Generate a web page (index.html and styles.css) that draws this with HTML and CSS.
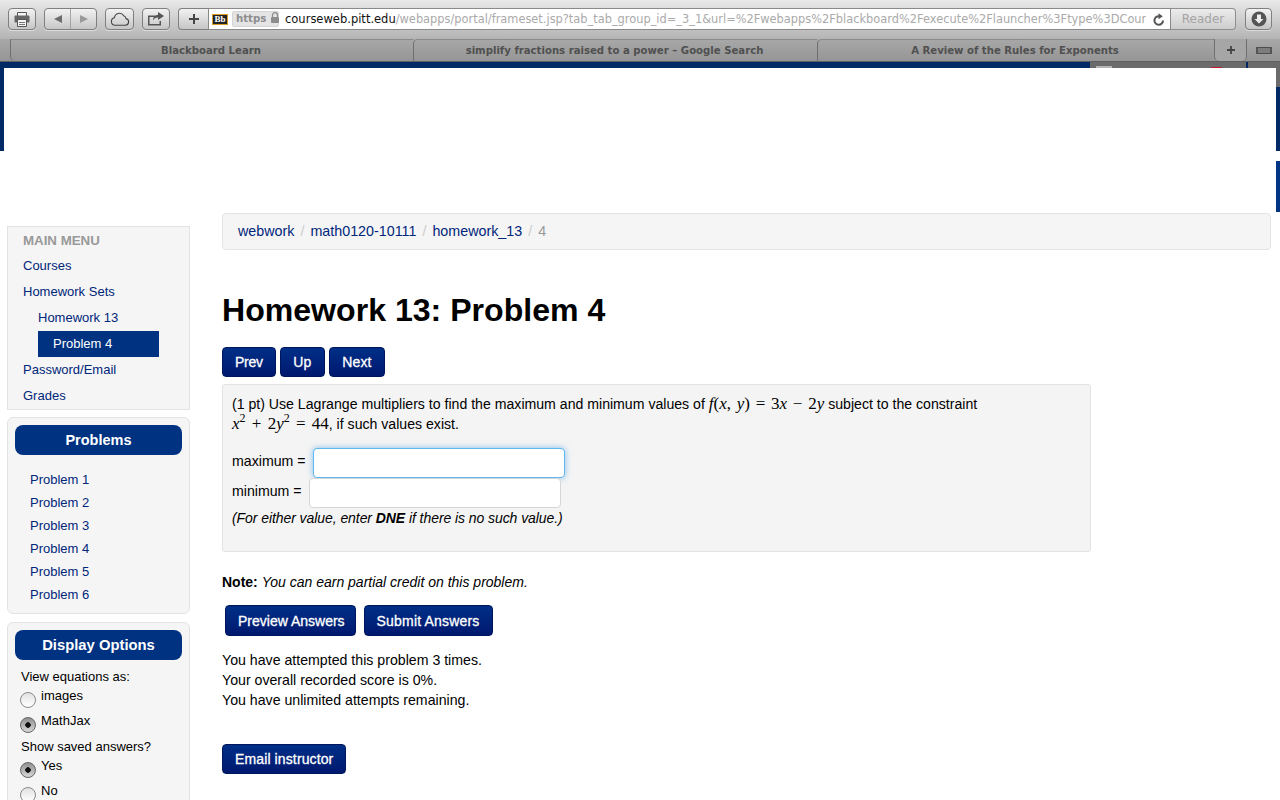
FILE: index.html
```html
<!DOCTYPE html>
<html lang="en">
<head>
<meta charset="utf-8">
<title>Homework 13: Problem 4</title>
<link rel="stylesheet" href="styles.css">
</head>
<body>
<div class="toolbar">
  <button class="tb tb-print"><svg width="16" height="15" viewBox="0 0 16 15"><path d="M3.500 .500h9v4h-9z" fill="#f4f4f4" stroke="#555"/><rect x=".5" y="3.500" width="15" height="7" rx="1" fill="#666"/><path d="M3.500 7.500h9v7h-9z" fill="#f4f4f4" stroke="#555"/><path d="M5 10.500h6M5 12.500h6" stroke="#777"/></svg></button>
  <div class="tb tb-nav"><span class="nav-half nav-left"><svg width="10" height="10" viewBox="0 0 10 10"><path d="M9 1v8L1 5z" fill="#6c6c6c"/></svg></span><span class="nav-half"><svg width="10" height="10" viewBox="0 0 10 10"><path d="M1 1v8l8-4z" fill="#9a9a9a"/></svg></span></div>
  <button class="tb tb-cloud"><svg width="20" height="14" viewBox="0 0 20 14"><path d="M5 13.300a3.800 3.800 0 0 1-.6-7.500 5 5 0 0 1 9.300-2 3.400 3.400 0 0 1 2.300 2.800A3.400 3.400 0 0 1 15.500 13.300z" fill="none" stroke="#444" stroke-width="1.100"/></svg></button>
  <button class="tb tb-share"><svg width="18" height="14" viewBox="0 0 18 14"><path d="M1 3.500h7v1.500H2.500v7h10V9H14v4.500H1z" fill="#555"/><path d="M11 0l6 4-6 4V5.500c-2.500 0-4 1-5 3 0-3.500 2-5.500 5-5.500z" fill="#555"/></svg></button>
  <div class="addr">
    <button class="addr-plus"><svg width="12" height="12" viewBox="0 0 12 12"><path d="M6 1v10M1 6h10" stroke="#444" stroke-width="2"/></svg></button>
    <div class="addr-field">
      <span class="bb-logo">Bb</span>
      <span class="https">https <svg width="10" height="11" viewBox="0 0 10 11"><path d="M2.500 5V3.200a2.500 2.500 0 0 1 5 0V5" fill="none" stroke="#8d8d8d" stroke-width="1.300"/><rect x="1" y="5" width="8" height="6" rx="1" fill="#8d8d8d"/></svg></span>
      <span class="url"><span class="url-host">courseweb.pitt.edu</span>/webapps/portal/frameset.jsp?tab_tab_group_id=_3_1&amp;url=%2Fwebapps%2Fblackboard%2Fexecute%2Flauncher%3Ftype%3DCour</span>
      <svg class="reload" width="12" height="13" viewBox="0 0 12 13"><path d="M10 7.500A4.300 4.300 0 1 1 6 3.200" fill="none" stroke="#555" stroke-width="2"/><path d="M5.500 .2l4.300 3-4.300 3z" fill="#555"/></svg>
    </div>
    <button class="reader">Reader</button>
  </div>
  <button class="tb tb-dl"><svg width="16" height="16" viewBox="0 0 16 16"><circle cx="8" cy="8" r="7.500" fill="#555"/><path d="M6 3.500h4V8h2.500L8 12.500 3.500 8H6z" fill="#eee"/></svg></button>
</div>
<div class="tabbar">
  <div class="tab tab-first">Blackboard Learn</div>
  <div class="tab">simplify fractions raised to a power – Google Search</div>
  <div class="tab tab-last">A Review of the Rules for Exponents</div>
  <div class="tab-add"><svg width="10" height="10" viewBox="0 0 10 10"><path d="M5 1v8M1 5h8" stroke="#444" stroke-width="1.800"/></svg></div>
  <div class="tab-list"><svg width="16" height="7" viewBox="0 0 16 7"><rect width="16" height="7" fill="#7d7d7d"/><path d="M0 .5h16M0 6.500h16" stroke="#4d4d4d"/><path d="M1 0v7M15 0v7" stroke="#555" stroke-width="2"/></svg></div>
</div>
<div class="topstrip"><span class="ts-navy"></span><span class="ts-gray"><span class="ts-white"></span><span class="ts-red"></span></span><span class="ts-thin"></span><span class="ts-end"></span></div>
<header class="banner">
  <div class="edge-left"></div>
  <div class="banner-white"></div>
  <div class="edge-right"><span class="er-gray"></span><span class="er-navy"></span><span class="er-gap"></span><span class="er-blue"></span></div>
</header>
<div class="page">
  <aside class="sidebar">
    <nav class="well menu">
      <div class="menu-head">MAIN MENU</div>
      <a class="menu-item">Courses</a>
      <a class="menu-item">Homework Sets</a>
      <a class="menu-item sub">Homework 13</a>
      <a class="menu-item active">Problem 4</a>
      <a class="menu-item">Password/Email</a>
      <a class="menu-item">Grades</a>
    </nav>
    <section class="well panel">
      <h3 class="panel-title">Problems</h3>
      <ul class="problem-list">
        <li>Problem 1</li><li>Problem 2</li><li>Problem 3</li><li>Problem 4</li><li>Problem 5</li><li>Problem 6</li>
      </ul>
    </section>
    <section class="well panel panel-options">
      <h3 class="panel-title">Display Options</h3>
      <div class="opt-label">View equations as:</div>
      <div class="radio"><span class="dot"></span><span class="radio-text">images</span></div>
      <div class="radio"><span class="dot on"></span><span class="radio-text">MathJax</span></div>
      <div class="opt-label opt-second">Show saved answers?</div>
      <div class="radio"><span class="dot on"></span><span class="radio-text">Yes</span></div>
      <div class="radio"><span class="dot"></span><span class="radio-text">No</span></div>
    </section>
  </aside>
  <main class="main">
    <div class="crumbs"><a>webwork</a><i>/</i><a>math0120-10111</a><i>/</i><a>homework_13</a><i>/</i><span>4</span></div>
    <h1 class="title">Homework 13: Problem 4</h1>
    <div class="btn-row"><a class="btn btn-prev">Prev</a><a class="btn btn-up">Up</a><a class="btn btn-next">Next</a></div>
    <div class="problem">
      <p class="statement">(1 pt) Use Lagrange multipliers to find the maximum and minimum values of <span class="m"><em>f</em>(<em>x</em>, <em>y</em>) = 3<em>x</em> − 2<em>y</em></span> subject to the constraint<br><span class="m m-wide"><em>x</em><sup>2</sup> + 2<em>y</em><sup>2</sup> = 44</span>, if such values exist.</p>
      <div class="answer"><span class="answer-label">maximum =</span><span class="input focus"></span></div>
      <div class="answer"><span class="answer-label">minimum =</span><span class="input"></span></div>
      <p class="hint"><em>(For either value, enter <b>DNE</b> if there is no such value.)</em></p>
    </div>
    <p class="note"><b>Note:</b> <em>You can earn partial credit on this problem.</em></p>
    <div class="btn-row submit-row"><a class="btn btn-tall btn-preview">Preview Answers</a><a class="btn btn-tall btn-submit">Submit Answers</a></div>
    <p class="score">You have attempted this problem 3 times.<br>Your overall recorded score is 0%.<br>You have unlimited attempts remaining.</p>
    <a class="btn btn-email">Email instructor</a>
  </main>
</div>
</body>
</html>
```
FILE: styles.css
```css
* { box-sizing: border-box; }
html, body { margin: 0; height: 800px; overflow: hidden; }
body { background: #fff; font: 14.160px/20px "Liberation Sans", Arial, sans-serif; color: #000; }

.toolbar { height: 39px; padding: 8px 8px 0; display: flex; background: linear-gradient(#e9e9e9, #b4b4b4); }
.tb { height: 22px; border: 1px solid #7f7f7f; border-radius: 4px; background: linear-gradient(#f2f2f2, #c6c6c6); display: flex; align-items: center; justify-content: center; padding: 0; box-shadow: 0 1px 0 rgba(255,255,255,.45); }
.tb-print { width: 28px; }
.tb-nav { width: 53px; margin-left: 8px; }
.nav-half { flex: 1; height: 100%; display: flex; align-items: center; justify-content: center; }
.nav-left { border-right: 1px solid #a5a5a5; }
.tb-cloud { width: 29px; margin-left: 8px; }
.tb-share { width: 28px; margin-left: 8px; }
.addr { display: flex; margin-left: 8px; width: 1058px; height: 22px; }
.addr-plus { width: 30px; height: 22px; padding: 0; border: 1px solid #7f7f7f; border-right: 0; border-radius: 4px 0 0 4px; background: linear-gradient(#f2f2f2, #c6c6c6); display: flex; align-items: center; justify-content: center; }
.addr-field { width: 963px; height: 22px; border: 1px solid #8a8a8a; background: #fff; display: flex; align-items: center; padding-left: 3px; overflow: hidden; font: 11.400px/20px "DejaVu Sans", sans-serif; }
.bb-logo { width: 16px; height: 11px; background: #222; border: 1px solid #d99a2b; color: #fff; font: bold 9px/9px "Liberation Serif", serif; text-align: center; flex: none; }
.https { flex: none; margin-left: 4px; width: 47px; height: 16px; background: #e4e4e4; border: 1px solid #d4d4d4; border-radius: 2px; color: #8d8d8d; font: bold 10.200px/14px "DejaVu Sans", sans-serif; padding-left: 3px; white-space: nowrap; }
.https svg { vertical-align: -1px; }
.url { margin-left: 6px; width: 861px; flex: none; overflow: hidden; white-space: nowrap; color: #aaa; }
.url-host { color: #111; font-size: 11.500px; }
.reload { flex: none; margin-left: 7px; }
.reader { width: 65px; height: 22px; padding: 0; border: 1px solid #8f8f8f; border-left: 0; border-radius: 0 4px 4px 0; background: linear-gradient(#ececec, #cdcdcd); color: #a4a4a4; font: 12px "DejaVu Sans", sans-serif; }
.tb-dl { width: 27px; margin-left: 9px; }

.tabbar { height: 23px; display: flex; background: linear-gradient(#a8a8a8, #959595); border-bottom: 1px solid #5f5f5f; }
.tab { width: 404px; height: 22px; padding-right: 2px; border-left: 1px solid #6f6f6f; border-top: 1px solid #8a8a8a; border-radius: 5px 0 0 0; text-align: center; font: bold 10.150px/21px "DejaVu Sans", sans-serif; color: #505050; white-space: nowrap; }
.tab-first { width: 403px; margin-left: 10px; border-radius: 0 0 0 5px; }
.tab-last { width: 397px; }
.tab-add { width: 33px; height: 22px; border-left: 1px solid #6f6f6f; border-right: 1px solid #6f6f6f; border-radius: 0 0 5px 5px; display: flex; align-items: center; justify-content: center; background: #a6a6a6; }
.tab-list { flex: 1; display: flex; align-items: center; justify-content: center; }

.topstrip { height: 6px; display: flex; }
.ts-navy { width: 1090px; background: #002a66; }
.ts-gray { width: 156px; background: #6b6b6b; display: flex; align-items: flex-end; padding-left: 6px; }
.ts-white { width: 16px; height: 2px; background: #b5b5b5; }
.ts-red { width: 11px; height: 1px; margin-left: 99px; background: #c3152c; }
.ts-thin { width: 2px; background: #002a66; }
.ts-end { flex: 1; background: #6b6b6b; }

.banner { height: 144px; display: flex; }
.edge-left { width: 4px; height: 83px; background: #002a66; }
.banner-white { flex: 1; background: #fff; }
.edge-right { width: 4px; display: flex; flex-direction: column; }
.er-gray { height: 19px; background: #6b6b6b; }
.er-navy { height: 64px; background: #002a66; }
.er-gap { height: 10px; background: #fff; }
.er-blue { height: 51px; background: #003484; }

.page { display: flex; padding: 1px 9px 0 7px; align-items: flex-start; }
.sidebar { width: 183px; flex: none; margin-top: 13px; }
.well { background: #f5f5f5; border: 1px solid #e3e3e3; }
.menu { height: 184px; padding-top: 1px; color: #00267a; }
.menu-head { height: 25px; padding-left: 15px; font-weight: bold; font-size: 13.300px; line-height: 25px; color: #999; }
.menu-item { display: block; height: 26px; line-height: 25px; padding-left: 15px; font-size: 13px; }
.menu-item.sub { padding-left: 30px; }
.menu-item.active { margin-left: 30px; width: 121px; padding-left: 15px; background: #003282; color: #fff; }
.panel { border-radius: 6px; margin-top: 7px; height: 197px; padding: 7px; }
.panel-options { margin-top: 8px; height: 200px; }
.panel-title { margin: 0; height: 30px; border-radius: 8px; background: #003282; color: #fff; text-align: center; font-size: 14.500px; line-height: 30px; font-weight: bold; }
.panel-options .panel-title { font-size: 14.800px; }
.problem-list { list-style: none; margin: 13px 0 0; padding: 0 0 0 15px; color: #00267a; font-size: 13px; }
.problem-list li { height: 23px; line-height: 23px; }
.opt-label { margin: 8px 0 0 6px; font-size: 13px; line-height: 18px; }
.opt-second { margin-top: 2px; }
.radio { display: flex; height: 25px; margin-left: 5px; font-size: 13px; line-height: 16px; gap: 5px; }
.radio-text { margin-top: 2px; }
.dot { width: 16px; height: 16px; border-radius: 50%; margin-top: 6px; border: 1px solid #8a8a8a; background: linear-gradient(#e2e2e2, #fff); flex: none; }
.dot.on { background: radial-gradient(circle, #111 0 2.500px, transparent 3px), linear-gradient(#8f8f8f, #d8d8d8); border-color: #666; }

.main { width: 1049px; margin-left: 32px; }
.crumbs { height: 37px; background: #f5f5f5; border: 1px solid #e3e3e3; border-radius: 4px; padding-left: 15px; line-height: 35px; color: #00267a; font-size: 14.300px; }
.crumbs i { font-style: normal; color: #ccc; padding: 0 6px; }
.crumbs span { color: #999; }
.title { margin: 39px 0 0; height: 42px; font-size: 32.100px; line-height: 42px; font-weight: bold; }
.btn-row { display: flex; gap: 4px; margin-top: 16px; }
.btn { display: inline-block; height: 30px; padding: 0 12px; line-height: 29px; color: #fff; font-size: 14px; -webkit-text-stroke: .3px #fff; border: 1px solid #00165c; border-radius: 4px; background: linear-gradient(#002f87, #00186f); }
.btn-prev { letter-spacing: -.25px; }
.btn-up { padding: 0 12.500px; }
.btn-next { padding: 0 12.500px; letter-spacing: .15px; }
.problem { width: 869px; height: 168px; margin-top: 7px; padding: 9px; background: #f4f4f4; border: 1px solid #e3e3e3; border-radius: 3px; }
.statement { margin: 0; font-size: 14.120px; }
.m { font: 17px/18px "Liberation Serif", serif; word-spacing: 1.500px; }
.m-wide { word-spacing: 2px; }
.m sup { font-size: 12px; line-height: 0; }
.answer { display: flex; align-items: center; gap: 7px; height: 30px; }
.answer-label { padding-bottom: 4px; font-size: 14.160px; }
.statement + .answer { margin-top: 14px; }
.input { width: 252px; height: 30px; background: #fff; border: 1px solid #d6d6d6; border-radius: 4px; }
.input.focus { border-color: #62b7ee; box-shadow: 0 0 6px rgba(82,168,236,.7); }
.hint { margin: 0; font-size: 14px; letter-spacing: -.07px; }
.note { margin: 20px 0 0; font-size: 14px; }
.submit-row { margin: 13px 0 0 3px; gap: 8px; }
.btn-tall { height: 31px; line-height: 30px; }
.btn-preview { padding: 0 10px 0 12px; }
.btn-submit { letter-spacing: .18px; }
.score { margin: 14px 0 0; }
.btn-email { margin-top: 34px; letter-spacing: .12px; }
```
